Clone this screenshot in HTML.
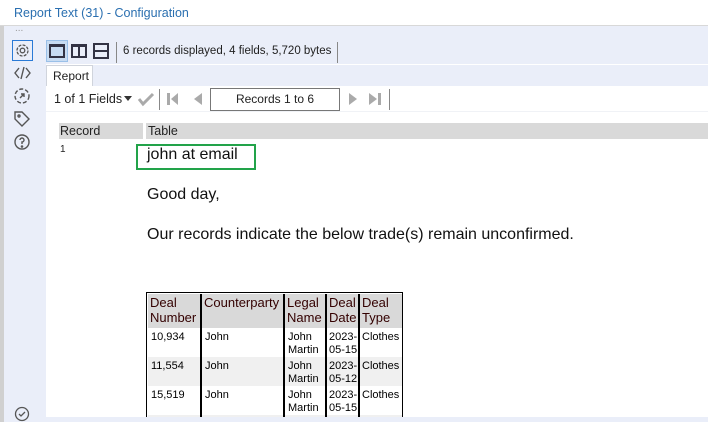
<!DOCTYPE html>
<html><head><style>
*{margin:0;padding:0;box-sizing:border-box}
body{width:708px;height:422px;overflow:hidden;background:#fff;font-family:"Liberation Sans",sans-serif;position:relative}
.a{position:absolute}
.ui{font-family:"Liberation Sans",sans-serif}
table{border-collapse:collapse;table-layout:fixed;width:255px}
td{font-size:11px;font-family:"Liberation Sans",sans-serif;vertical-align:top;padding:3px 2px 0 3px;line-height:13px;overflow:hidden;white-space:nowrap}
td+td{border-left:2px solid #000}
.h td{font-size:13px;line-height:15px;color:#300;background:#d9d9d9;padding:1px 2px}
</style></head><body>
<div class="a ui" style="left:14px;top:6px;font-size:12.5px;color:#2a6fb0">Report Text (31) - Configuration</div>
<div class="a" style="left:0;top:25px;width:708px;height:1px;background:#d8d8d8"></div>
<div class="a" style="left:0;top:26px;width:4px;height:396px;background:#d0d0d0"></div>
<div class="a" style="left:4px;top:26px;width:704px;height:396px;background:#eaeef9"></div>
<div class="a ui" style="left:15px;top:23px;font-size:10px;color:#999">...</div>
<div class="a" style="left:12px;top:40px;width:21px;height:21px;border:1px solid #2a7ad6"></div>
<svg class="a" style="left:14px;top:42px" width="17" height="17" viewBox="0 0 17 17" fill="none" stroke="#555" stroke-width="1.3"><circle cx="8.5" cy="8.5" r="2.3"/><circle cx="8.5" cy="8.5" r="5.5" stroke-dasharray="3 1.3"/></svg>
<svg class="a" style="left:13px;top:65px" width="19" height="16" viewBox="0 0 19 16" fill="none" stroke="#555" stroke-width="1.4"><path d="M6 3L2 8l4 5M13 3l4 5-4 5M11 2L8 14"/></svg>
<svg class="a" style="left:13px;top:87px" width="18" height="18" viewBox="0 0 18 18" fill="none" stroke="#555" stroke-width="1.4"><circle cx="9" cy="9" r="7" stroke-dasharray="4 2"/><path d="M7 11l4-4M8 7h3v3"/></svg>
<svg class="a" style="left:13px;top:110px" width="18" height="18" viewBox="0 0 18 18" fill="none" stroke="#555" stroke-width="1.4"><path d="M2 2h7l7 7-7 7-7-7z"/><circle cx="6" cy="6" r="1"/></svg>
<svg class="a" style="left:13px;top:133px" width="18" height="18" viewBox="0 0 18 18" fill="none" stroke="#555" stroke-width="1.4"><circle cx="9" cy="9" r="7"/><path d="M7 7a2 2 0 1 1 2 2v2"/><circle cx="9" cy="13.5" r=".6"/></svg>
<svg class="a" style="left:14px;top:406px" width="16" height="16" viewBox="0 0 16 16" fill="none" stroke="#555" stroke-width="1.3"><circle cx="8" cy="8" r="6.5"/><path d="M5 8l2 2 4-4"/></svg>
<div class="a" style="left:46px;top:40px;width:22px;height:22px;background:#c8dcf2;border:1px solid #9ac0e8"></div>
<div class="a" style="left:49px;top:44px;width:16px;height:14px;border:2px solid #334;border-top-width:3px"></div>
<div class="a" style="left:71px;top:44px;width:16px;height:14px;border:2px solid #334;border-top-width:3px"></div>
<div class="a" style="left:78px;top:44px;width:2px;height:14px;background:#334"></div>
<div class="a" style="left:93px;top:43px;width:16px;height:16px;border:2px solid #334"></div>
<div class="a" style="left:93px;top:50px;width:16px;height:2px;background:#334"></div>
<div class="a" style="left:116px;top:42px;width:1px;height:21px;background:#888"></div>
<div class="a ui" style="left:123px;top:45px;font-size:11.5px;color:#222">6 records displayed, 4 fields, 5,720 bytes</div>
<div class="a" style="left:337px;top:42px;width:1px;height:21px;background:#888"></div>
<div class="a" style="left:46px;top:64px;width:662px;height:1px;background:#fff"></div>
<div class="a" style="left:46px;top:65px;width:47px;height:22px;background:#fff;border:1px solid #d0d4dc;border-bottom:none"></div>
<div class="a ui" style="left:53px;top:69px;font-size:12px;color:#222">Report</div>
<div class="a" style="left:46px;top:86px;width:662px;height:331px;background:#fff"></div>
<div class="a ui" style="left:54px;top:92px;font-size:12.5px;color:#222">1 of 1 Fields</div>
<svg class="a" style="left:124px;top:96px" width="8" height="6"><path d="M0 0h8L4 5z" fill="#333"/></svg>
<svg class="a" style="left:137px;top:91px" width="18" height="16"><path d="M2 8l4 5 10-10" fill="none" stroke="#aaa" stroke-width="3"/></svg>
<div class="a" style="left:159px;top:89px;width:1px;height:21px;background:#888"></div>
<svg class="a" style="left:167px;top:93px" width="12" height="12"><rect x="0" y="0" width="3" height="12" fill="#aaa"/><path d="M11 0v12L4 6z" fill="#aaa"/></svg>
<svg class="a" style="left:193px;top:93px" width="10" height="12"><path d="M9 0v12L1 6z" fill="#aaa"/></svg>
<div class="a ui" style="left:210px;top:88px;width:130px;height:23px;border:1px solid #777;font-size:12px;text-align:center;line-height:21px;color:#222">Records 1 to 6</div>
<svg class="a" style="left:348px;top:93px" width="10" height="12"><path d="M1 0v12L9 6z" fill="#aaa"/></svg>
<svg class="a" style="left:369px;top:93px" width="13" height="12"><path d="M0 0v12L8 6z" fill="#aaa"/><rect x="9" y="0" width="3" height="12" fill="#aaa"/></svg>
<div class="a" style="left:389px;top:89px;width:1px;height:21px;background:#888"></div>
<div class="a" style="left:46px;top:111px;width:662px;height:1px;background:#f0f2f6"></div>
<div class="a" style="left:59px;top:123px;width:84px;height:16px;background:#d9d9d9"></div>
<div class="a" style="left:146px;top:123px;width:562px;height:16px;background:#d9d9d9"></div>
<div class="a ui" style="left:60px;top:124px;font-size:12.5px;color:#222">Record</div>
<div class="a ui" style="left:148px;top:124px;font-size:12.5px;color:#222">Table</div>
<div class="a" style="left:60px;top:144px;font-size:10px;color:#222">1</div>
<div class="a" style="left:136px;top:144px;width:120px;height:26px;border:2px solid #22a34a"></div>
<div class="a" style="left:147px;top:146px;font-size:16px;color:#111">john at email</div>
<div class="a" style="left:147px;top:186px;font-size:16px;color:#111">Good day,</div>
<div class="a" style="left:147px;top:226px;font-size:16px;color:#111">Our records indicate the below trade(s) remain unconfirmed.</div>
<div class="a" style="left:146px;top:292px;width:257px;height:125px;border:1px solid #000;border-bottom:none;overflow:hidden;background:#fff;padding:1px">
<table>
<colgroup><col style="width:53px"><col style="width:83px"><col style="width:42px"><col style="width:33px"><col style="width:44px"></colgroup>
<tr class="h" style="height:34px"><td>Deal<br>Number</td><td>Counterparty</td><td>Legal<br>Name</td><td>Deal<br>Date</td><td>Deal<br>Type</td></tr>
<tr style="height:28px"><td>10,934</td><td>John</td><td>John<br>Martin</td><td style="padding-left:2px">2023-<br>05-15</td><td style="padding-left:2px">Clothes</td></tr>
<tr style="height:28px;background:#f0f0f0"><td>11,554</td><td>John</td><td>John<br>Martin</td><td style="padding-left:2px">2023-<br>05-12</td><td style="padding-left:2px">Clothes</td></tr>
<tr style="height:28px"><td>15,519</td><td>John</td><td>John<br>Martin</td><td style="padding-left:2px">2023-<br>05-15</td><td style="padding-left:2px">Clothes</td></tr>
<tr style="height:28px;background:#f0f0f0"><td>&nbsp;</td><td></td><td></td><td></td><td></td></tr>
</table></div>
<div class="a" style="left:44px;top:417px;width:664px;height:5px;background:#eaeef9"></div>
</body></html>
